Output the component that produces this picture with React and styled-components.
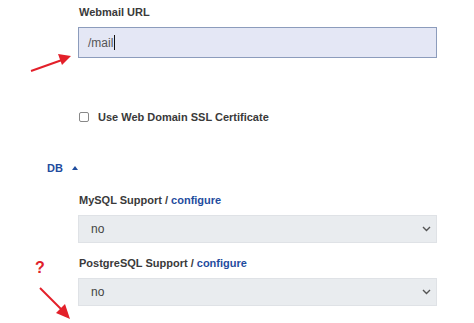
import styled, { createGlobalStyle } from "styled-components";

const Global = createGlobalStyle`
  html, body {
    margin: 0;
    padding: 0;
    background: #fff;
    font-family: "Liberation Sans", Arial, sans-serif;
  }
`;

const Page = styled.div`
  position: relative;
  width: 474px;
  height: 323px;
  overflow: hidden;
  padding-left: 47px;
  box-sizing: border-box;
`;

const Fields = styled.div`
  display: flex;
  flex-direction: column;
  padding-left: 31px;
  width: 359px;
  margin-top: ${(p) => p.$top || 0}px;
`;

const Label = styled.div`
  font-size: 11px;
  font-weight: bold;
  color: #3a3a3a;
  line-height: 16px;
  margin-top: ${(p) => p.$top || 0}px;
  margin-left: 1px;
  a {
    color: #1f4c9e;
    text-decoration: none;
  }
`;

const TextBox = styled.div`
  margin-top: 7px;
  height: 31px;
  box-sizing: border-box;
  border: 1px solid #8c9cbc;
  background: #e4e7f5;
  display: flex;
  align-items: center;
  padding-left: 9px;
  font-size: 12px;
  color: #555;
`;

const Caret = styled.span`
  display: inline-block;
  width: 1px;
  height: 15px;
  background: #111;
  margin-left: 1px;
`;

const CheckRow = styled.label`
  display: flex;
  align-items: center;
  gap: 9px;
  margin-top: 51px;
  height: 16px;
  margin-left: 1px;
  font-size: 11px;
  font-weight: bold;
  color: #3a3a3a;
`;

const Box = styled.span`
  width: 8px;
  height: 8px;
  border: 1px solid #888;
  border-radius: 2px;
  background: #fff;
`;

const Section = styled.div`
  display: flex;
  align-items: center;
  gap: 9px;
  margin-top: 35px;
  height: 16px;
  font-size: 11px;
  font-weight: bold;
  color: #1f4c9e;
`;

const Up = styled.span`
  width: 0;
  height: 0;
  border-left: 3.5px solid transparent;
  border-right: 3.5px solid transparent;
  border-bottom: 4px solid #1f4c9e;
  margin-top: -1px;
`;

const Select = styled.div`
  position: relative;
  margin-top: 7px;
  height: 28px;
  box-sizing: border-box;
  border: 1px solid #dfe2e6;
  background: #e9ecef;
  display: flex;
  align-items: center;
  padding-left: 12px;
  font-size: 12px;
  color: #444;
`;

const Chevron = styled.svg`
  position: absolute;
  right: 5px;
  top: 50%;
  margin-top: -3px;
`;

const Overlay = styled.svg`
  position: absolute;
  left: 0;
  top: 0;
  pointer-events: none;
`;

const Question = styled.span`
  position: absolute;
  left: 35px;
  top: 259px;
  font-size: 16px;
  font-weight: bold;
  color: #e0202a;
`;

const Dropdown = ({ value }) => (
  <Select>
    {value}
    <Chevron width="9" height="6" viewBox="0 0 9 6">
      <path d="M1 1l3.5 3.5L8 1" fill="none" stroke="#555" strokeWidth="1.4" />
    </Chevron>
  </Select>
);

export default function App() {
  return (
    <>
      <Global />
      <Page>
        <Fields>
          <Label $top={4}>Webmail URL</Label>
          <TextBox>
            /mail
            <Caret />
          </TextBox>
          <CheckRow>
            <Box />
            Use Web Domain SSL Certificate
          </CheckRow>
        </Fields>
        <Section>
          DB <Up />
        </Section>
        <Fields>
          <Label $top={16}>
            MySQL Support / <a href="#">configure</a>
          </Label>
          <Dropdown value="no" />
          <Label $top={12}>
            PostgreSQL Support / <a href="#">configure</a>
          </Label>
          <Dropdown value="no" />
        </Fields>
        <Question>?</Question>
        <Overlay width="474" height="323">
          <line x1="31" y1="71" x2="62" y2="60" stroke="#e3202a" strokeWidth="2" />
          <polygon points="71,56 58,54 62,65" fill="#e3202a" />
          <line x1="40" y1="288" x2="62" y2="310" stroke="#e3202a" strokeWidth="2" />
          <polygon points="70,319 56,313 65,304" fill="#e3202a" />
        </Overlay>
      </Page>
    </>
  );
}
